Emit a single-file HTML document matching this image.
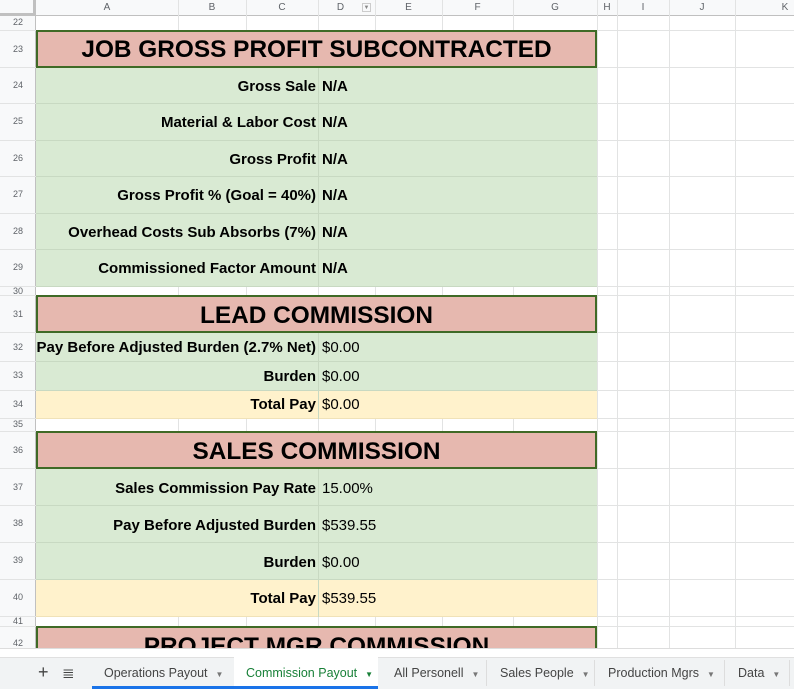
<!DOCTYPE html><html><head><style>
*{margin:0;padding:0;box-sizing:border-box}
body{width:794px;height:689px;overflow:hidden;background:#fff;font-family:"Liberation Sans",Arial,sans-serif;position:relative}
.a{position:absolute}
.vl{position:absolute;top:0;width:1px;height:648px;background:#e2e3e3}
.hl{position:absolute;left:0;width:794px;height:1px;background:#e2e3e3}
.ch{position:absolute;top:0;height:16px;font-size:10px;color:#5f6368;text-align:center;line-height:16px}
.rn{position:absolute;left:0;width:36px;font-size:9px;color:#5f6368;text-align:center}
.band{position:absolute;left:36px;width:561px;border-bottom:1px solid #c8d9c2}
.g{background:#d9ead3}.y{background:#fff2cc;border-bottom-color:#f0e2b8}
.t{position:absolute;left:36px;width:561px;background:#e6b8af;border:2px solid #3f6a26;font-weight:bold;color:#000;text-align:center;font-size:24.4px}
.lb{position:absolute;right:478px;font-weight:bold;font-size:15px;line-height:18px;white-space:nowrap;margin-top:2px}
.v{position:absolute;left:322px;font-size:15px;line-height:18px;white-space:nowrap;margin-top:2px}
.b{font-weight:bold}
.sep{position:absolute;left:318px;width:1px;background:#c8d9c2}
.tab{position:absolute;top:657px;height:32px;line-height:32px;font-size:12.5px;color:#444;padding-left:12px}
.ar{font-size:8px;color:#777;margin-left:8px}
</style></head><body>
<div class="a" style="left:0;top:0;width:794px;height:16px;background:#f8f9fa;border-bottom:1px solid #c0c0c0"></div>
<div class="a" style="left:0;top:0;width:36px;height:648px;background:#f8f9fa;border-right:1px solid #c0c0c0"></div>
<div class="a" style="left:0;top:0;width:36px;height:16px;border-right:3px solid #c0c0c0;border-bottom:3px solid #c0c0c0"></div>
<div class="vl" style="left:178px"></div><div class="vl" style="left:246px"></div><div class="vl" style="left:318px"></div><div class="vl" style="left:375px"></div><div class="vl" style="left:442px"></div><div class="vl" style="left:513px"></div><div class="vl" style="left:597px"></div><div class="vl" style="left:617px"></div><div class="vl" style="left:669px"></div><div class="vl" style="left:735px"></div>
<div class="ch" style="left:36px;width:142px">A</div><div class="ch" style="left:178px;width:68px">B</div><div class="ch" style="left:246px;width:72px">C</div><div class="ch" style="left:318px;width:45px">D</div>
<div class="a" style="left:362px;top:3px;width:9px;height:9px;border:1px solid #ccc;font-size:6px;color:#888;text-align:center;line-height:8px">▼</div>
<div class="ch" style="left:375px;width:67px">E</div><div class="ch" style="left:442px;width:71px">F</div><div class="ch" style="left:513px;width:84px">G</div><div class="ch" style="left:597px;width:20px">H</div><div class="ch" style="left:617px;width:52px">I</div><div class="ch" style="left:669px;width:66px">J</div><div class="ch" style="left:735px;width:100px">K</div>
<div class="hl" style="top:30px"></div><div class="hl" style="top:67px"></div><div class="hl" style="top:103px"></div><div class="hl" style="top:140px"></div><div class="hl" style="top:176px"></div><div class="hl" style="top:213px"></div><div class="hl" style="top:249px"></div><div class="hl" style="top:286px"></div><div class="hl" style="top:295px"></div><div class="hl" style="top:332px"></div><div class="hl" style="top:361px"></div><div class="hl" style="top:390px"></div><div class="hl" style="top:418px"></div><div class="hl" style="top:431px"></div><div class="hl" style="top:468px"></div><div class="hl" style="top:505px"></div><div class="hl" style="top:542px"></div><div class="hl" style="top:579px"></div><div class="hl" style="top:616px"></div><div class="hl" style="top:626px"></div>
<div class="rn" style="top:17px">22</div><div class="rn" style="top:44px">23</div><div class="rn" style="top:80px">24</div><div class="rn" style="top:116px">25</div><div class="rn" style="top:153px">26</div><div class="rn" style="top:189px">27</div><div class="rn" style="top:226px">28</div><div class="rn" style="top:262px">29</div><div class="rn" style="top:286px">30</div><div class="rn" style="top:309px">31</div><div class="rn" style="top:342px">32</div><div class="rn" style="top:370px">33</div><div class="rn" style="top:399px">34</div><div class="rn" style="top:419px">35</div><div class="rn" style="top:445px">36</div><div class="rn" style="top:482px">37</div><div class="rn" style="top:518px">38</div><div class="rn" style="top:555px">39</div><div class="rn" style="top:592px">40</div><div class="rn" style="top:616px">41</div><div class="rn" style="top:638px">42</div>
<div class="t" style="top:30px;height:38px;line-height:36px">JOB GROSS PROFIT SUBCONTRACTED</div>
<div class="band g" style="top:68px;height:36px"></div><div class="band g" style="top:104px;height:37px"></div><div class="band g" style="top:141px;height:36px"></div><div class="band g" style="top:177px;height:37px"></div><div class="band g" style="top:214px;height:36px"></div><div class="band g" style="top:250px;height:37px"></div>
<div class="sep" style="top:68px;height:219px"></div>
<div class="lb" style="top:76px">Gross Sale</div><div class="v b" style="top:76px">N/A</div>
<div class="lb" style="top:112px">Material &amp; Labor Cost</div><div class="v b" style="top:112px">N/A</div>
<div class="lb" style="top:149px">Gross Profit</div><div class="v b" style="top:149px">N/A</div>
<div class="lb" style="top:185px">Gross Profit % (Goal = 40%)</div><div class="v b" style="top:185px">N/A</div>
<div class="lb" style="top:222px">Overhead Costs Sub Absorbs (7%)</div><div class="v b" style="top:222px">N/A</div>
<div class="lb" style="top:258px">Commissioned Factor Amount</div><div class="v b" style="top:258px">N/A</div>
<div class="t" style="top:295px;height:38px;line-height:37px">LEAD COMMISSION</div>
<div class="band g" style="top:333px;height:29px"></div><div class="band g" style="top:362px;height:29px"></div><div class="band y" style="top:391px;height:28px"></div>
<div class="sep" style="top:333px;height:86px"></div>
<div class="lb" style="top:337px">Pay Before Adjusted Burden (2.7% Net)</div><div class="v" style="top:337px">$0.00</div>
<div class="lb" style="top:366px">Burden</div><div class="v" style="top:366px">$0.00</div>
<div class="lb" style="top:394px">Total Pay</div><div class="v" style="top:394px">$0.00</div>
<div class="t" style="top:431px;height:38px;line-height:37px">SALES COMMISSION</div>
<div class="band g" style="top:469px;height:37px"></div><div class="band g" style="top:506px;height:37px"></div><div class="band g" style="top:543px;height:37px"></div><div class="band y" style="top:580px;height:37px"></div>
<div class="sep" style="top:469px;height:148px"></div>
<div class="lb" style="top:478px">Sales Commission Pay Rate</div><div class="v" style="top:478px">15.00%</div>
<div class="lb" style="top:515px">Pay Before Adjusted Burden</div><div class="v" style="top:515px">$539.55</div>
<div class="lb" style="top:552px">Burden</div><div class="v" style="top:552px">$0.00</div>
<div class="lb" style="top:588px">Total Pay</div><div class="v" style="top:588px">$539.55</div>
<div class="t" style="top:626px;height:40px;line-height:38px;overflow:hidden">PROJECT MGR COMMISSION</div>
<div class="a" style="left:0;top:648px;width:794px;height:9px;background:#fff;border-top:1px solid #ddd"></div>
<div class="a" style="left:0;top:657px;width:794px;height:32px;background:#f1f3f4;border-top:1px solid #e0e0e0"></div>
<div class="a" style="left:38px;top:662px;font-size:18px;color:#444">+</div>
<div class="a" style="left:62px;top:664px;font-size:15px;color:#444">≣</div>
<div class="tab" style="left:92px;width:142px">Operations Payout<span class="ar">▼</span></div>
<div class="tab" style="left:234px;width:144px;background:#fff;color:#188038">Commission Payout<span class="ar" style="color:#188038">▼</span></div>
<div class="a" style="left:92px;top:686px;width:286px;height:3px;background:#1a73e8"></div>
<div class="tab" style="left:382px">All Personell<span class="ar">▼</span></div>
<div class="tab" style="left:488px">Sales People<span class="ar">▼</span></div>
<div class="tab" style="left:596px">Production Mgrs<span class="ar">▼</span></div>
<div class="tab" style="left:726px">Data<span class="ar">▼</span></div>
<div class="a" style="left:486px;top:660px;width:1px;height:26px;background:#ddd"></div>
<div class="a" style="left:594px;top:660px;width:1px;height:26px;background:#ddd"></div>
<div class="a" style="left:724px;top:660px;width:1px;height:26px;background:#ddd"></div>
<div class="a" style="left:789px;top:660px;width:1px;height:26px;background:#ddd"></div>
</body></html>
